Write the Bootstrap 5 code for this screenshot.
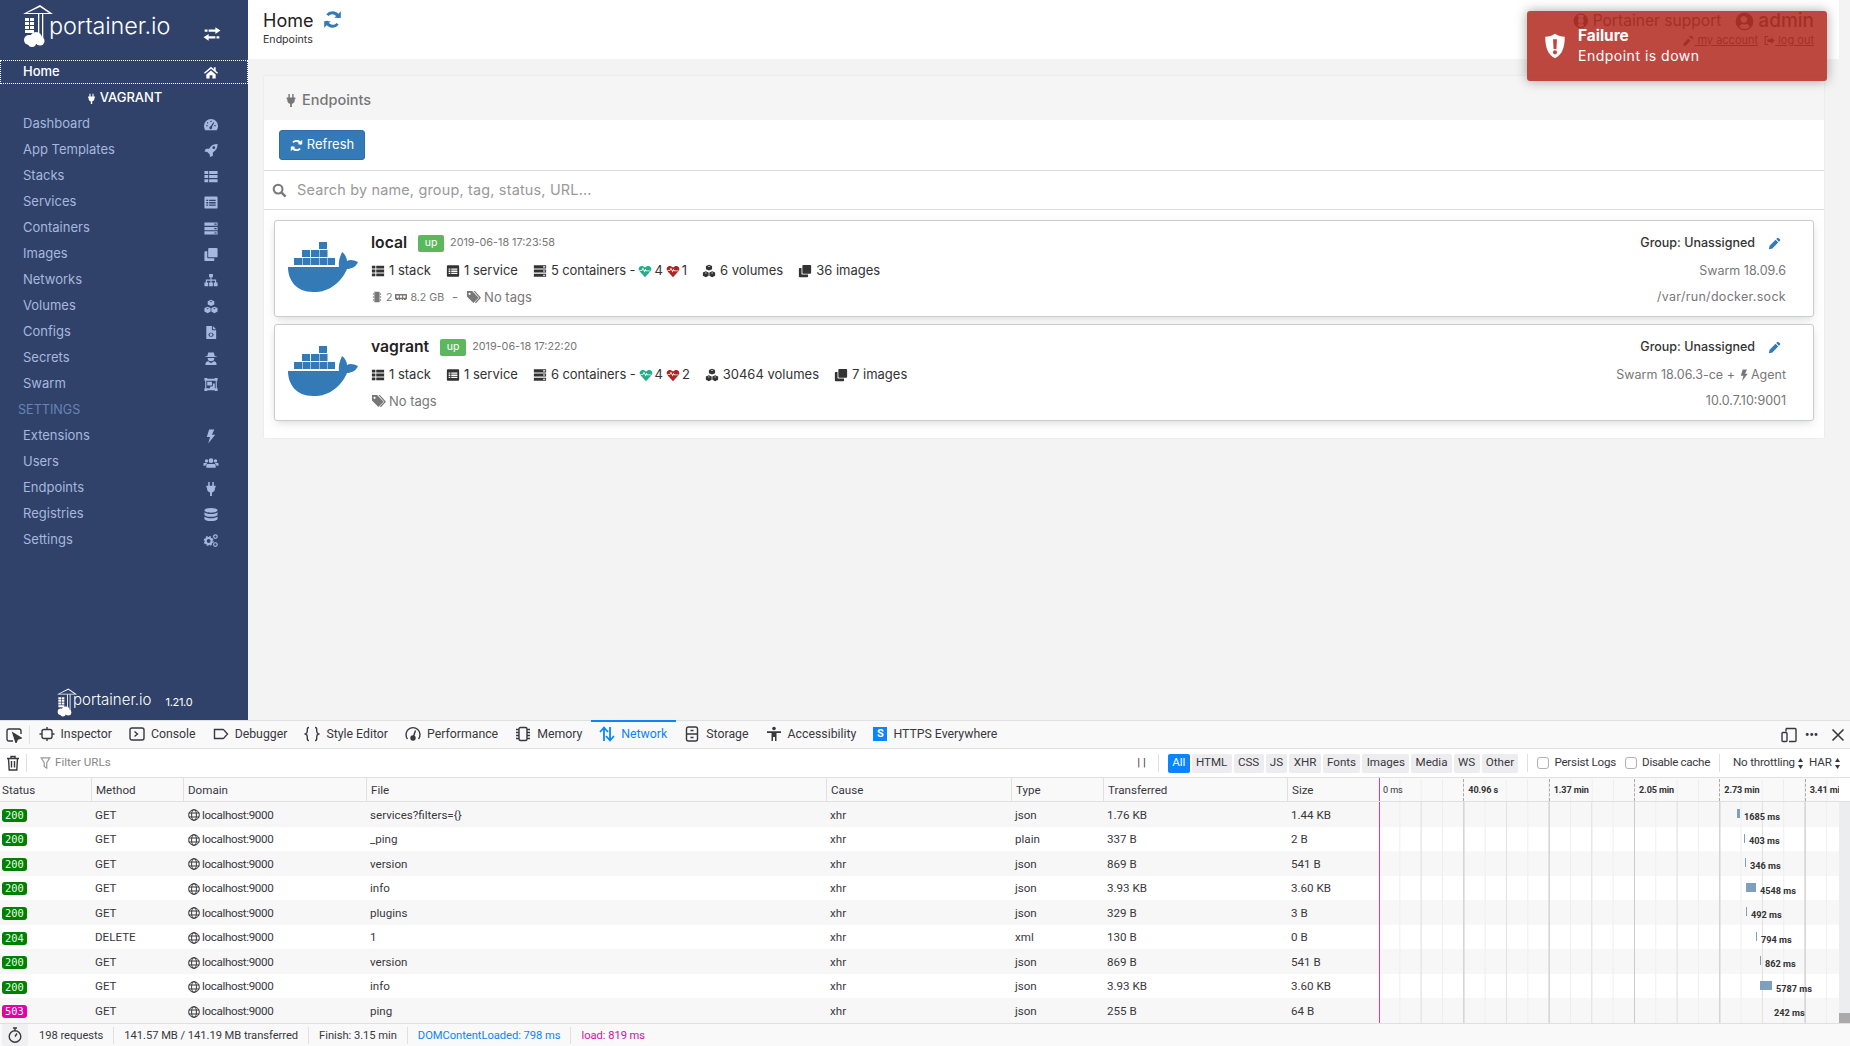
<!DOCTYPE html>
<html lang="en"><head><meta charset="utf-8"><title>Portainer</title>
<link href="https://cdn.jsdelivr.net/npm/bootstrap@5.3.0/dist/css/bootstrap.min.css" rel="stylesheet">
<style>
html,body{height:1046px;overflow:hidden}
body{font-family:Inter,"Liberation Sans",sans-serif;font-size:13px;color:#333;background:#f3f3f3;position:relative}
svg.ic{width:1em;height:1em;fill:currentColor;flex:none;display:inline-block}
.topzone{height:720px}
.sidebar{width:248px;background:#30426a;color:#a6b8dd;flex:none}
.brand{height:60px;padding-left:23px;padding-top:5px;padding-right:27px;color:#fff}
svg.brand-logo{width:30px;height:42px}
.brand-name{font-size:23.4px;font-weight:300;letter-spacing:-.1px;margin-left:-4px;margin-top:2px;line-height:38px}
svg.brand-swap{font-size:18px;margin-left:auto;margin-top:21px}
.side-row{height:26px;padding-left:23px;padding-right:28px;padding-top:2px;color:#a6b8dd;text-decoration:none;font-size:13px}
.side-row svg{font-size:15px;width:18px}
.side-home{height:24px;padding-top:0;color:#fff;outline:1px dotted #fff;outline-offset:-1px;font-weight:500}
.side-env{height:26px;padding-top:2px;color:#fff;font-weight:500}
.side-env svg{font-size:11px;margin-right:3px}
.side-title{height:26px;padding-left:18px;padding-top:2px;color:#6a82b6;font-size:12.6px}
.side-foot{color:#fff;padding-bottom:3px;padding-left:57px}
svg.foot-logo{width:20px;height:29px}
.foot-name{font-size:15px;font-weight:300;margin-left:-4px;margin-top:-5px}
.foot-ver{font-size:11px;letter-spacing:-.3px;margin-left:14px}
.main-head{height:59px;background:#fff;margin-right:11px;padding-left:15px}
.page-title{font-size:18px;line-height:22px;padding-top:10px;color:#222}
.page-title svg{font-size:19px;color:#337ab7;margin-left:10px;vertical-align:-2px}
.page-sub{font-size:10.6px;line-height:14px;margin-top:1px;color:#333}
.head-right{padding-right:25px;padding-top:10px;color:#555}
.hr-line{height:22px}
.hr-support{font-size:15.6px;margin-right:14px}
.hr-admin{font-size:19px;font-weight:500}
.hr-sub{font-size:11px;height:16px}
.hr-sub a{color:#555;margin-left:6px}
.work{padding:16px 25px 0 15px}
.widget{background:#fff;border:1px solid #ececec;border-radius:2px}
.wid-title{height:44px;background:#f5f5f5;padding-left:20px;padding-top:3px;color:#767676;font-size:14.5px;font-weight:500}
.wid-title svg{font-size:14px;margin-right:4px}
.wid-tools{height:51px;padding:10px 15px;border-bottom:1px solid #ddd}
.btn-ref{background:#337ab7;border:1px solid #2e6da4;color:#fff;font-size:13px;height:30px;width:86px;padding:0;border-radius:3px}
.search-row{height:39px;padding-left:8px;border-bottom:1px solid #ddd;color:#7a7a7a}
.search-row svg{font-size:15px;margin-right:10px}
.search-row span{font-size:14.4px;color:#999;letter-spacing:.2px}
.items{padding:10px 10px 17px}
.ep{height:97px;border:1px solid #ccc;border-radius:3px;box-shadow:0 3px 10px -2px rgba(161,170,166,.5);background:#fff;padding:8px 27px 0 13px}
.ep+.ep{margin-top:7px}
svg.whale{width:71px;height:50px;color:#337ab7;margin-top:13px;margin-right:12px;flex:none}
.l1{height:28px}.l2{height:28px}.l3{height:25px}
.ep-name{font-size:15.7px;font-weight:600;color:#222;margin-right:11px}
.up-chip{background:#5cb85c;color:#fff;font-size:10.5px;width:26px;height:17px;border-radius:2px;margin-right:6px}
.ep-date{font-size:10.8px;color:#777}
.facts{gap:15px}
.facts svg{font-size:14px;margin-right:4px}
.facts svg.hb{font-size:14px;margin:0 2px 0 3px}
.tight{letter-spacing:-.1px}
.c-ok{color:#23ae89}.c-bad{color:#ae2323}
.muted-row{color:#777;font-size:13px}
.muted-row svg{font-size:15px;margin-right:3px}
.tiny{font-size:10.6px}
.tiny svg{font-size:12px}
.ep-right{color:#777;font-size:12.5px}
.grp{color:#333;font-weight:500}
.pen{color:#337ab7;font-size:13px;margin-left:13px;margin-right:5px}
.sock{letter-spacing:.3px}
.toast-fail{position:absolute;top:11px;left:1527px;width:300px;height:70px;background:rgba(178,40,31,.85);color:#fff;border-radius:3px;box-shadow:0 0 12px rgba(0,0,0,.35);padding-left:15px}
.toast-fail svg{font-size:26px;margin-right:10px}
.toast-t{font-weight:700;font-size:15.4px;line-height:20px}
.toast-m{font-size:14px;line-height:20px;letter-spacing:.5px}
.dev{height:326px;background:#fff;font-family:Roboto,"Liberation Sans",sans-serif;font-size:12px;color:#38383d;border-top:1px solid #e0e0e1}
.dev svg{flex:none}
.dv-tabs{height:28px;background:#f9f9fa;border-bottom:1px solid #e0e0e1;flex:none}
.dv-pick{width:30px;border-right:1px solid #e0e0e1;height:18px;padding-left:6px}
.dv-tab{height:28px;margin-top:-1px;padding:0 8.5px 2px;border-top:2px solid transparent;white-space:nowrap;font-size:12.3px}
.dv-tab svg,.dv-pick svg,.dv-right svg,.dv-bar svg{width:16px;height:16px;fill:none;stroke:#38383d;stroke-width:1.4;margin-right:6px}
.dv-tab.on{border-top-color:#0a84ff;color:#0a84ff}
.dv-tab.on svg{stroke:#0a84ff}
.dv-s{width:14px;height:14px;background:#0a84ff;color:#fff;font-weight:700;font-size:11px;line-height:14px;text-align:center;margin-right:6px}
.dv-right{padding-right:4px}
.dv-right svg{margin:0 0 0 12px}
.dv-bar{height:29px;border-bottom:1px solid #e0e0e1;flex:none;color:#38383d;font-size:11.6px}
.dv-trash{width:27px;height:18px;border-right:1px solid #e0e0e1;padding-left:5px}
.dv-filter{color:#888;padding-left:13px}
.dv-bar .dv-filter svg{width:11px;height:12px;stroke:#999;margin-right:4px}
.dv-pause{margin-right:12px;color:#38383d}
.dv-chips{gap:2px;margin-left:9px;margin-right:9px}
.dv-chip{height:19px;padding:0 4.3px;background:#ededf0;border-radius:2px;color:#38383d}
.dv-chip.on{background:#0a84ff;color:#fff}
.dv-div{height:18px;border-left:1px solid #e0e0e1}
.dv-check{width:12px;height:12px;border:1px solid #b1b1b3;border-radius:3px;background:#fff;margin-left:9px;margin-right:5px}
.dv-lbl{letter-spacing:-.2px}
.dv-lbl2{letter-spacing:-.32px}
.dv-bar svg.dv-updown{width:5px;height:11px;margin:0 0 0 3px;fill:#38383d;stroke:none}
.dv-bar svg.dv-last{margin-right:10px}
.dv-thr{margin-left:13px}
.dv-har{margin-left:6px}
.dv-sep2{margin-left:9px}
.net-grid{display:grid;grid-template-columns:91px 92px 183px 460px 185px 92px 184px 92px 460px 11px;align-items:stretch}
.net-head{height:24px;background:#f9f9fa;border-bottom:1px solid #e0e0e1;flex:none;font-size:11.6px}
.net-head>div{border-left:1px solid #e0e0e1;padding-left:4px;padding-top:1px;line-height:23px;overflow:hidden;white-space:nowrap}
.net-head>div:first-child{border-left:0;padding-left:2px}
.net-head .wf-head{padding:1px 0 0;border-left:1px solid #d63bbd;display:flex}
.wf-tick{width:85.33px;flex:none;padding-left:4px;font-size:9.1px;font-weight:700;letter-spacing:-.1px;border-right:1px dashed #aaa;background-size:21.33px 100%;background-image:linear-gradient(90deg,transparent 20.3px,#eee 20.3px,#eee 21.33px);color:#333}
.wf-tick:first-child{margin-left:-1px;font-weight:400}
.head-sp{border:0!important;background:#fff}
.net-rows{display:grid;grid-template-rows:repeat(9,1fr);flex:1 1 0;min-height:0}
.net-row{font-size:11.6px;min-height:0}
.net-row:nth-child(odd){background:#f7f7f7}
.net-row:nth-child(even){background:#fff}
.net-row>div{display:flex;align-items:center;padding-left:4px;padding-top:2px;white-space:nowrap;overflow:hidden}
.net-row>div:first-child{padding-left:2px}
.net-code{font-family:"DejaVu Sans Mono","Liberation Mono",monospace;font-size:10.4px;color:#e6ffe6;background:#008000;height:13px;width:25px;border-radius:3px;line-height:13px;text-align:center}
.net-code.err{background:#e500a4;color:#fff}
.net-globe{width:12px;height:12px;stroke:#38383d;fill:none;stroke-width:1;margin-left:1px;margin-right:2px}
.dom{letter-spacing:-.35px}
.net-row>.wf{padding:0;background-image:linear-gradient(90deg,#d63bbd 1px,transparent 1px),linear-gradient(90deg,transparent 84.33px,#ccc 84.33px,#ccc 85.33px),linear-gradient(90deg,transparent 41.67px,#e2e2e2 41.67px,#e2e2e2 42.67px),linear-gradient(90deg,transparent 20.33px,#eee 20.33px,#eee 21.33px);background-size:100% 100%,85.33px 100%,42.67px 100%,21.33px 100%;overflow:hidden}
.wf-bar{background:#7f9fbf;height:9px;flex:none;align-self:flex-start;margin-top:7px}
.wf-lbl{font-size:9.2px;font-weight:700;color:#333;margin-top:5px;margin-left:4px}
.net-row>.scroll-col{background:#ecedef;padding:0;display:flex;align-items:flex-end}
.scroll-thumb{background:#aaa;height:10px;width:11px}
.dv-status{height:23px;background:#f9f9fa;border-top:1px solid #e0e0e1;flex:none;font-size:11.2px;letter-spacing:-.05px}
.dv-watch{width:26px;height:22px;margin-left:2px;margin-right:11px;background:#f0f0f2;border-radius:2px}
.dv-watch svg{width:16px;height:16px;fill:none;stroke:#38383d;stroke-width:1.4}
.st{padding-right:10px;margin-right:10px;border-right:1px solid #e0e0e1;line-height:17px}
.st-blue{color:#0a84ff}.st-pink{color:#d0149a;border:0}
</style></head>
<body class="d-flex flex-column">
<svg width="0" height="0" class="position-absolute"><defs>
<symbol id="i-swap" viewBox="0 0 16 16"><path d="M5 3h6V1l4.500 3L11 7V5H5zM1.500 3h2.500v2H1.500zM11 9H5V7L.5 10 5 13v-2h6zM12 9h2.500v2H12z"/></symbol>
<symbol id="i-home" viewBox="0 0 16 16"><path d="M8 1.800.5 8.300l1 1.100L8 3.900l6.500 5.500 1-1.100L13 6.100V2.300h-2v2.100zM3 10l5-4.200 5 4.200v4.500H9.500V11h-3v3.500H3z"/></symbol>
<symbol id="i-plug" viewBox="0 0 16 16"><path d="M5 1h1.600v4H5zM9.400 1H11v4H9.400zM3 5h10v2h-.8v1.500c0 2-1.500 3.500-3.200 3.700V16H7v-3.800c-1.700-.2-3.200-1.700-3.200-3.700V7H3z"/></symbol>
<symbol id="i-gauge" viewBox="0 0 16 16"><path fill-rule="evenodd" d="M8 2a7.500 7.500 0 0 0-7.500 7.500c0 1.600.5 3.100 1.400 4.500h12.200c.9-1.400 1.400-2.900 1.400-4.500A7.500 7.500 0 0 0 8 2zM7.300 4h1.400v1.400H7.300zM3 8.500h1.400v1.400H3zM11.600 8.500H13v1.400h-1.400zM4.300 5.300l1 1-.9.900-1-1zM10.500 5.500l.9.500L9 10.600a1.500 1.500 0 1 1-1.300-.7z"/></symbol>
<symbol id="i-rocket" viewBox="0 0 16 16"><path fill-rule="evenodd" d="M15 1c-4 0-7 1.500-9 5H2.500L1 9l3 .5 2.500 2.500.5 3 3-1.500V10c3.500-2 5-5 5-9zM11 3.500a1.500 1.500 0 1 1 0 3 1.500 1.500 0 0 1 0-3z"/></symbol>
<symbol id="i-stacks" viewBox="0 0 16 16"><path d="M1 2h4v3.200H1zM6 2h9v3.200H6zM1 6.400h4v3.200H1zM6 6.400h9v3.200H6zM1 10.800h4V14H1zM6 10.800h9V14H6z"/></symbol>
<symbol id="i-list" viewBox="0 0 16 16"><path fill-rule="evenodd" d="M2 1.500h12a1 1 0 0 1 1 1v11a1 1 0 0 1-1 1H2a1 1 0 0 1-1-1v-11a1 1 0 0 1 1-1zM3 5v1.500h2V5zM6 5v1.500h7V5zM3 7.500V9h2V7.500zM6 7.500V9h7V7.500zM3 10v1.500h2V10zM6 10v1.500h7V10z"/></symbol>
<symbol id="i-server" viewBox="0 0 16 16"><path fill-rule="evenodd" d="M1 1.500h14V5H1zM1 6.300h14v3.500H1zM1 11h14v3.500H1zM11.500 2.700v1.200h2.500V2.700zM11.500 7.500v1.200h2.500V7.500zM11.500 12.200v1.200h2.500v-1.200z"/></symbol>
<symbol id="i-clone" viewBox="0 0 16 16"><path d="M6 1h8a1 1 0 0 1 1 1v8a1 1 0 0 1-1 1H6a1 1 0 0 1-1-1V2a1 1 0 0 1 1-1zM2 4.500h2V11a1 1 0 0 0 1 1h6.500v2a1 1 0 0 1-1 1H2a1 1 0 0 1-1-1V5.500a1 1 0 0 1 1-1z"/></symbol>
<symbol id="i-net" viewBox="0 0 16 16"><path d="M6 1h4v3.500H8.600V7H13.500v3H15v4h-4v-4h1.300V8.200H8.600V10H10v4H6v-4h1.400V8.200H3.700V10H5v4H1v-4h1.500V7h4.900V4.500H6z"/></symbol>
<symbol id="i-cubes" viewBox="0 0 16 16"><path fill-rule="evenodd" d="M8 .8l3.500 1.500v3.600L8 7.500 4.500 5.900V2.300zM4.400 8.200l3.200 1.500v3.600l-3.200 1.800L1 13.300V9.700zM11.600 8.200L15 9.700v3.600l-3.400 1.800-3.200-1.800V9.700zM8 2.200 6.500 2.800 8 3.500l1.500-.7zM4.400 9.700l-1.300.6 1.300.6 1.300-.6zM11.600 9.700l-1.300.6 1.300.6 1.300-.6z"/></symbol>
<symbol id="i-code" viewBox="0 0 16 16"><path fill-rule="evenodd" d="M3 1h6v4.500h4.500V15H3zM7 8 5 10.500 7 13l.8-.6-1.500-1.900 1.500-1.900zM9 8l-.8.6 1.500 1.900-1.500 1.900L9 13l2-2.500zM10 1l3.500 3.500H10z"/></symbol>
<symbol id="i-secret" viewBox="0 0 16 16"><path d="M5 1.500h6l1 4h2v1H2v-1h2zM4.500 7.500h7a3.500 3.500 0 0 1-7 0zM2 15c0-3 1.500-4 3-4l3 2 3-2c1.500 0 3 1 3 4z"/></symbol>
<symbol id="i-swarm" viewBox="0 0 16 16"><path fill-rule="evenodd" d="M1 1h3v.8h8V1h3v3h-.8v8h.8v3h-3v-.8H4v.8H1v-3h.8V4H1zM3 4v8h10V4zM4 5h5v4H4zM7 10h2V9.800h1V7h2v5H7z"/></symbol>
<symbol id="i-bolt" viewBox="0 0 16 16"><path d="M6 .5h5.500L9 6h3.500L5 15.500 7 8.500H3.500z"/></symbol>
<symbol id="i-users" viewBox="0 0 16 16"><path d="M8 3.500a2.500 2.500 0 1 1 0 5 2.500 2.500 0 0 1 0-5zM3.200 4.500a1.800 1.800 0 1 1 0 3.600 1.800 1.800 0 0 1 0-3.600zM12.800 4.500a1.800 1.800 0 1 1 0 3.600 1.800 1.800 0 0 1 0-3.600zM4.500 9.500h7c.8 0 1.500.7 1.500 1.500v2.500H3V11c0-.8.700-1.500 1.500-1.500zM0 9c0-.4.400-.6 1.500-.6h1.600c.3.500.6.800 1 1-1.200.2-2 1-2 2.100H0zM16 9c0-.4-.4-.6-1.500-.6h-1.600c-.3.500-.6.800-1 1 1.200.2 2 1 2 2.100H16z"/></symbol>
<symbol id="i-db" viewBox="0 0 16 16"><path d="M8 1c3.800 0 7 1.100 7 2.500S11.800 6 8 6 1 4.900 1 3.500 4.200 1 8 1zM1 5.500C2 6.800 5 7.400 8 7.400s6-.6 7-1.900V8c0 1.400-3.200 2.500-7 2.500S1 9.400 1 8zM1 10c1 1.300 4 1.900 7 1.900s6-.6 7-1.900v2.500c0 1.400-3.200 2.500-7 2.500s-7-1.100-7-2.500z"/></symbol>
<symbol id="i-cogs" viewBox="0 0 16 16"><circle cx="5.500" cy="8.500" r="3.200" fill="none" stroke="currentColor" stroke-width="2.200"/><circle cx="5.500" cy="8.500" r="4.700" fill="none" stroke="currentColor" stroke-width="1.200" stroke-dasharray="2 1.700"/><circle cx="12.700" cy="3.800" r="1.900" fill="none" stroke="currentColor" stroke-width="1.300"/><circle cx="12.700" cy="12.300" r="1.900" fill="none" stroke="currentColor" stroke-width="1.300"/></symbol>
<symbol id="i-refresh" viewBox="0 0 16 16"><path d="M13.300 6.800A5.500 5.500 0 0 0 3.700 4.300M2.700 9.200a5.500 5.500 0 0 0 9.600 2.500" fill="none" stroke="currentColor" stroke-width="2.400"/><path d="M15 1v5.500H9.500zM1 15V9.500h5.500z"/></symbol>
<symbol id="i-search" viewBox="0 0 16 16"><circle cx="6.500" cy="6.500" r="4.700" fill="none" stroke="currentColor" stroke-width="2.200"/><path d="M10 10l4.500 4.500" stroke="currentColor" stroke-width="2.600" fill="none"/></symbol>
<symbol id="i-tags" viewBox="0 0 16 16"><path fill-rule="evenodd" d="M1 1h5.500l7 7.200-5.600 5.600L1 7zM3.800 2.800a1.200 1.200 0 1 0 0 2.400 1.200 1.200 0 0 0 0-2.400z"/><path d="M8 1h1.500l6.500 7.200L10.500 14l-1-1 4.700-4.800z"/></symbol>
<symbol id="i-heart" viewBox="0 0 16 16"><path fill-rule="evenodd" d="M8 15 2 8.700C.6 7.200.5 5.400 1.200 4 2.400 1.800 5.700 1.300 8 4c2.300-2.700 5.600-2.200 6.800 0 .7 1.400.6 3.200-.8 4.700zM1.500 7.800h3.200l1-1.800 1.800 3.700 1.200-2.300.5.900h4.800v-1h-4.200L8.500 5.500 7.500 7.600 5.700 3.900 4.200 6.800H1.500z"/></symbol>
<symbol id="i-pencil" viewBox="0 0 16 16"><path d="M11.500 1.200a1 1 0 0 1 1.400 0l1.900 1.900a1 1 0 0 1 0 1.400l-1.400 1.400-3.300-3.300zM9.300 3.400l3.300 3.300-7.300 7.300L1 15l1-4.300z"/></symbol>
<symbol id="i-chip" viewBox="0 0 16 16"><path d="M4.500 1h7v14h-7zM2.500 3h1.300v2H2.500zM2.500 7h1.300v2H2.500zM2.500 11h1.300v2H2.500zM12.200 3h1.300v2h-1.300zM12.200 7h1.300v2h-1.300zM12.200 11h1.300v2h-1.300z"/></symbol>
<symbol id="i-mem" viewBox="0 0 16 16"><path fill-rule="evenodd" d="M0 4h16v6.500h-1V12h-3v-1.500h-1V12H9v-1.500H7V12H5v-1.500H4V12H1v-1.500H0zM2 6v3h3V6zM6.500 6v3h3V6zM11 6v3h3V6z"/></symbol>
<symbol id="i-wrench" viewBox="0 0 16 16"><path d="M10.500 1a4.500 4.500 0 0 1 4.200 6l-2.700-2.600-2-.4-.4-2L7 1.400zM7.600 5 11 8.500 4.500 15A2 2 0 0 1 1 12.500z"/></symbol>
<symbol id="i-out" viewBox="0 0 16 16"><path d="M6 3H2.500v10H6v1.500H1v-13h5zM10 3l5.500 5-5.500 5v-3H5V6h5z"/></symbol>
<symbol id="i-ring" viewBox="0 0 16 16"><path fill-rule="evenodd" d="M8 .5a7.500 7.500 0 1 1 0 15 7.500 7.500 0 0 1 0-15zM8 5a3 3 0 1 0 0 6 3 3 0 0 0 0-6zM4.500 2.800 6 5.100c.6-.4 1.300-.6 2-.6s1.400.2 2 .6l1.500-2.300A6.300 6.300 0 0 0 8 1.800a6.300 6.300 0 0 0-3.500 1zM4.500 13.200 6 10.900c.6.400 1.300.6 2 .6s1.400-.2 2-.6l1.500 2.300a6.300 6.300 0 0 1-7 0z"/></symbol>
<symbol id="i-user" viewBox="0 0 16 16"><path fill-rule="evenodd" d="M8 .5a7.500 7.500 0 1 1 0 15 7.500 7.500 0 0 1 0-15zM8 3.500A2.800 2.800 0 1 0 8 9a2.800 2.800 0 0 0 0-5.500zM3.700 12.700A5.900 5.900 0 0 0 8 14.300a5.900 5.900 0 0 0 4.300-1.600c-.3-1.600-1.500-2.500-2.600-2.700a3.800 3.800 0 0 1-3.400 0c-1.100.2-2.300 1.100-2.600 2.700z"/></symbol>
<symbol id="i-shield" viewBox="0 0 16 16"><path fill-rule="evenodd" d="M8 .5c1.700 1.200 3.700 1.800 6 1.800 0 6.500-1.500 11-6 13.200C3.500 13.300 2 8.800 2 2.300 4.300 2.300 6.300 1.700 8 .5zM6.800 3.800l.3 6h1.800l.3-6zM8 10.600a1.300 1.300 0 1 0 0 2.600 1.300 1.300 0 0 0 0-2.600z"/></symbol>
<symbol id="i-logo" viewBox="0 0 30 42"><path d="M0 9 17 0l13 9zM17 2 4 8h22z" fill-rule="evenodd"/><path d="M15 9h1.300v28H15zM19 9h1.300v28H19z"/><path d="M2 13h4v3H2zM7 13h4v3H7zM2 17h4v3H2zM7 17h4v3H7zM2 21h4v3H2zM7 21h4v3H7zM2 25h9v3H2z"/><circle cx="6" cy="35" r="5"/><circle cx="13" cy="33" r="6"/><circle cx="17" cy="36" r="4.500"/><circle cx="9" cy="38" r="4"/></symbol>
<symbol id="i-whale" viewBox="0 0 71 50"><path d="M31 0h8v7h-8zM14 8h8v7h-8zM23 8h8v7h-8zM31.500 8h8v7h-8zM6 16h8v7H6zM14.500 16h8v7h-8zM23 16h8v7h-8zM31.500 16h8v7h-8zM40 16h7v7h-7zM0 25H51C50 18 53 13 54 10c3 2 5 6 5 9 3-2 7-1 11 1-2 5-7 7-11 7-4 10-16 24-34 23C8 50 0 38 0 25z"/></symbol>
<symbol id="d-pick" viewBox="0 0 16 16"><path d="M7 14H3a2 2 0 0 1-2-2V4a2 2 0 0 1 2-2h10a2 2 0 0 1 2 2v3"/><path d="M7 6l8 5-3.500 1L10 15.500z" fill="#38383d"/></symbol>
<symbol id="d-insp" viewBox="0 0 16 16"><rect x="3" y="3.500" width="10" height="9" rx="2"/><path d="M8 1v2.500M8 12.500V15M.5 8H3M13 8h2.500"/></symbol>
<symbol id="d-cons" viewBox="0 0 16 16"><rect x="1" y="2" width="14" height="12" rx="2"/><path d="M5.500 5.500 8.500 8l-3 2.500"/></symbol>
<symbol id="d-dbg" viewBox="0 0 16 16"><path d="M1.500 3.500h8.500a1 1 0 0 1 .8.400L14.500 8l-3.700 4.100a1 1 0 0 1-.8.400H1.500z"/></symbol>
<symbol id="d-style" viewBox="0 0 16 16"><path d="M5 1.500C3 1.500 3.300 3 3.300 5S3 7.500 1.500 8c1.500.5 1.800 1 1.800 3S3 14.500 5 14.500M11 1.500c2 0 1.700 1.500 1.700 3.500s.3 2.500 1.800 3c-1.500.5-1.800 1-1.800 3s.3 3.500-1.700 3.500"/></symbol>
<symbol id="d-perf" viewBox="0 0 16 16"><path d="M2.500 13A7 7 0 1 1 13.500 13"/><path d="M10.500 4.500 8.600 10"/><circle cx="8" cy="12" r="2" fill="#38383d"/></symbol>
<symbol id="d-mem" viewBox="0 0 16 16"><rect x="4" y="1.500" width="8" height="13" rx="1.500"/><path d="M1 3.500h3M1 6.500h3M1 9.500h3M1 12.500h3M12 3.500h3M12 6.500h3M12 9.500h3M12 12.500h3"/></symbol>
<symbol id="d-net" viewBox="0 0 16 16"><path d="M5 15V2M1 6l4-4.500L9 6M11 1v13M7 10l4 4.500L15 10" stroke-width="1.800"/></symbol>
<symbol id="d-store" viewBox="0 0 16 16"><rect x="2.500" y="1" width="11" height="14" rx="2"/><path d="M2.500 8h11M6.500 4.500h3M6.500 11.500h3"/></symbol>
<symbol id="d-a11y" viewBox="0 0 16 16"><circle cx="8" cy="2.500" r="1.800" fill="#38383d" stroke="none"/><path d="M1 5.300h14v1.800h-4.500V15H9V11H7v4H5.500V7.100H1z" fill="#38383d" stroke="none"/></symbol>
<symbol id="d-resp" viewBox="0 0 16 16"><rect x="1" y="5.500" width="5" height="9" rx="1"/><path d="M5 1.500h9a1 1 0 0 1 1 1v11a1 1 0 0 1-1 1H8"/><path d="M5 1.500v3"/></symbol>
<symbol id="d-x" viewBox="0 0 16 16"><path d="M2.500 2.500l11 11M13.500 2.500l-11 11" stroke-width="1.600"/></symbol>
<symbol id="d-trash" viewBox="0 0 16 16"><path d="M2 3.500h12M6 3.500V1.500h4v2M3.500 3.500l.7 11.500h7.600l.7-11.500M6.500 6v6.500M9.500 6v6.500"/></symbol>
<symbol id="d-funnel" viewBox="0 0 12 14"><path d="M1 1h10L7.500 6.500V13l-3-2V6.500z"/></symbol>
<symbol id="d-watch" viewBox="0 0 16 16"><circle cx="8" cy="9.500" r="5.800"/><path d="M6 1h4M8 1v2.500M8 9.500l2-3"/></symbol>
<symbol id="d-globe" viewBox="0 0 12 12"><circle cx="6" cy="6" r="5.300"/><ellipse cx="6" cy="6" rx="2.400" ry="5.300"/><path d="M.7 4h10.600M.7 8h10.600"/></symbol>
<symbol id="d-ud" viewBox="0 0 5 11"><path d="M2.500 0 5 4H0zM2.500 11 0 7h5z"/></symbol>
</defs></svg>

<div class="topzone d-flex flex-none">
<nav class="sidebar d-flex flex-column">
<div class="brand d-flex align-items-start"><svg class="ic brand-logo"><use href="#i-logo"/></svg><span class="brand-name">portainer.io</span><svg class="ic brand-swap"><use href="#i-swap"/></svg></div>
<a class="side-row side-home d-flex align-items-center justify-content-between" href="#">Home<svg class="ic"><use href="#i-home"/></svg></a>
<div class="side-env d-flex align-items-center justify-content-center"><svg class="ic"><use href="#i-plug"/></svg>VAGRANT</div>
<a class="side-row d-flex align-items-center justify-content-between" href="#">Dashboard<svg class="ic"><use href="#i-gauge"/></svg></a>
<a class="side-row d-flex align-items-center justify-content-between" href="#">App Templates<svg class="ic"><use href="#i-rocket"/></svg></a>
<a class="side-row d-flex align-items-center justify-content-between" href="#">Stacks<svg class="ic"><use href="#i-stacks"/></svg></a>
<a class="side-row d-flex align-items-center justify-content-between" href="#">Services<svg class="ic"><use href="#i-list"/></svg></a>
<a class="side-row d-flex align-items-center justify-content-between" href="#">Containers<svg class="ic"><use href="#i-server"/></svg></a>
<a class="side-row d-flex align-items-center justify-content-between" href="#">Images<svg class="ic"><use href="#i-clone"/></svg></a>
<a class="side-row d-flex align-items-center justify-content-between" href="#">Networks<svg class="ic"><use href="#i-net"/></svg></a>
<a class="side-row d-flex align-items-center justify-content-between" href="#">Volumes<svg class="ic"><use href="#i-cubes"/></svg></a>
<a class="side-row d-flex align-items-center justify-content-between" href="#">Configs<svg class="ic"><use href="#i-code"/></svg></a>
<a class="side-row d-flex align-items-center justify-content-between" href="#">Secrets<svg class="ic"><use href="#i-secret"/></svg></a>
<a class="side-row d-flex align-items-center justify-content-between" href="#">Swarm<svg class="ic"><use href="#i-swarm"/></svg></a>
<div class="side-title d-flex align-items-center">SETTINGS</div>
<a class="side-row d-flex align-items-center justify-content-between" href="#">Extensions<svg class="ic"><use href="#i-bolt"/></svg></a>
<a class="side-row d-flex align-items-center justify-content-between" href="#">Users<svg class="ic"><use href="#i-users"/></svg></a>
<a class="side-row d-flex align-items-center justify-content-between" href="#">Endpoints<svg class="ic"><use href="#i-plug"/></svg></a>
<a class="side-row d-flex align-items-center justify-content-between" href="#">Registries<svg class="ic"><use href="#i-db"/></svg></a>
<a class="side-row d-flex align-items-center justify-content-between" href="#">Settings<svg class="ic"><use href="#i-cogs"/></svg></a>
<div class="side-foot mt-auto d-flex align-items-center"><svg class="ic foot-logo"><use href="#i-logo"/></svg><span class="foot-name">portainer.io</span><span class="foot-ver">1.21.0</span></div>
</nav>
<div class="flex-grow-1 d-flex flex-column">
<header class="main-head d-flex justify-content-between flex-none">
<div><div class="page-title">Home<svg class="ic"><use href="#i-refresh"/></svg></div><div class="page-sub">Endpoints</div></div>
<div class="head-right">
<div class="hr-line d-flex align-items-center justify-content-end"><span class="hr-support d-flex align-items-center gap-1"><svg class="ic"><use href="#i-ring"/></svg>Portainer support</span><span class="hr-admin d-flex align-items-center gap-1"><svg class="ic"><use href="#i-user"/></svg>admin</span></div>
<div class="hr-sub d-flex align-items-center justify-content-end"><a href="#"><svg class="ic"><use href="#i-wrench"/></svg> my account</a><a href="#"><svg class="ic"><use href="#i-out"/></svg> log out</a></div>
</div>
</header>
<main class="work flex-grow-1">
<section class="widget">
<div class="wid-title d-flex align-items-center"><svg class="ic"><use href="#i-plug"/></svg>Endpoints</div>
<div class="wid-tools"><button class="btn btn-ref d-flex align-items-center justify-content-center gap-1"><svg class="ic"><use href="#i-refresh"/></svg>Refresh</button></div>
<div class="search-row d-flex align-items-center"><svg class="ic"><use href="#i-search"/></svg><span>Search by name, group, tag, status, URL...</span></div>
<div class="items">
<article class="ep d-flex">
<svg class="whale"><use href="#i-whale" fill="currentColor"/></svg>
<div class="flex-grow-1">
<div class="l1 d-flex align-items-center"><span class="ep-name">local</span><span class="up-chip d-flex align-items-center justify-content-center">up</span><span class="ep-date">2019-06-18 17:23:58</span></div>
<div class="l2 d-flex align-items-center facts"><span class="d-flex align-items-center"><svg class="ic"><use href="#i-stacks"/></svg>1 stack</span><span class="d-flex align-items-center"><svg class="ic"><use href="#i-list"/></svg>1 service</span><span class="d-flex align-items-center tight"><svg class="ic"><use href="#i-server"/></svg>5 containers -<svg class="ic hb c-ok"><use href="#i-heart"/></svg>4<svg class="ic hb c-bad"><use href="#i-heart"/></svg>1</span><span class="d-flex align-items-center"><svg class="ic"><use href="#i-cubes"/></svg>6 volumes</span><span class="d-flex align-items-center"><svg class="ic"><use href="#i-clone"/></svg>36 images</span></div>
<div class="l3 d-flex align-items-center muted-row"><span class="tiny d-flex align-items-center"><svg class="ic"><use href="#i-chip"/></svg>2&nbsp;<svg class="ic"><use href="#i-mem"/></svg>8.2 GB</span><span class="mx-2">-</span><svg class="ic"><use href="#i-tags"/></svg>No tags</div>
</div>
<div class="ep-right text-end">
<div class="l1 d-flex align-items-center justify-content-end grp">Group: Unassigned<svg class="ic pen"><use href="#i-pencil"/></svg></div>
<div class="l2 d-flex align-items-center justify-content-end">Swarm 18.09.6</div>
<div class="l3 d-flex align-items-center justify-content-end sock">/var/run/docker.sock</div>
</div>
</article>
<article class="ep d-flex">
<svg class="whale"><use href="#i-whale" fill="currentColor"/></svg>
<div class="flex-grow-1">
<div class="l1 d-flex align-items-center"><span class="ep-name">vagrant</span><span class="up-chip d-flex align-items-center justify-content-center">up</span><span class="ep-date">2019-06-18 17:22:20</span></div>
<div class="l2 d-flex align-items-center facts"><span class="d-flex align-items-center"><svg class="ic"><use href="#i-stacks"/></svg>1 stack</span><span class="d-flex align-items-center"><svg class="ic"><use href="#i-list"/></svg>1 service</span><span class="d-flex align-items-center tight"><svg class="ic"><use href="#i-server"/></svg>6 containers -<svg class="ic hb c-ok"><use href="#i-heart"/></svg>4<svg class="ic hb c-bad"><use href="#i-heart"/></svg>2</span><span class="d-flex align-items-center"><svg class="ic"><use href="#i-cubes"/></svg>30464 volumes</span><span class="d-flex align-items-center"><svg class="ic"><use href="#i-clone"/></svg>7 images</span></div>
<div class="l3 d-flex align-items-center muted-row"><svg class="ic"><use href="#i-tags"/></svg>No tags</div>
</div>
<div class="ep-right text-end">
<div class="l1 d-flex align-items-center justify-content-end grp">Group: Unassigned<svg class="ic pen"><use href="#i-pencil"/></svg></div>
<div class="l2 d-flex align-items-center justify-content-end">Swarm 18.06.3-ce +&nbsp;<svg class="ic"><use href="#i-bolt"/></svg>Agent</div>
<div class="l3 d-flex align-items-center justify-content-end">10.0.7.10:9001</div>
</div>
</article>
</div>
</section>
</main>
</div>
</div>

<div class="toast-fail d-flex align-items-center"><svg class="ic"><use href="#i-shield"/></svg><div><div class="toast-t">Failure</div><div class="toast-m">Endpoint is down</div></div></div>

<section class="dev d-flex flex-column flex-none">
<div class="dv-tabs d-flex align-items-center">
<div class="dv-pick d-flex align-items-center"><svg><use href="#d-pick"/></svg></div>
<div class="dv-tab d-flex align-items-center"><svg><use href="#d-insp"/></svg>Inspector</div>
<div class="dv-tab d-flex align-items-center"><svg><use href="#d-cons"/></svg>Console</div>
<div class="dv-tab d-flex align-items-center"><svg><use href="#d-dbg"/></svg>Debugger</div>
<div class="dv-tab d-flex align-items-center"><svg><use href="#d-style"/></svg>Style Editor</div>
<div class="dv-tab d-flex align-items-center"><svg><use href="#d-perf"/></svg>Performance</div>
<div class="dv-tab d-flex align-items-center"><svg><use href="#d-mem"/></svg>Memory</div>
<div class="dv-tab on d-flex align-items-center"><svg><use href="#d-net"/></svg>Network</div>
<div class="dv-tab d-flex align-items-center"><svg><use href="#d-store"/></svg>Storage</div>
<div class="dv-tab d-flex align-items-center"><svg><use href="#d-a11y"/></svg>Accessibility</div>
<div class="dv-tab d-flex align-items-center"><span class="dv-s">S</span>HTTPS Everywhere</div>
<div class="dv-right ms-auto d-flex align-items-center"><svg><use href="#d-resp"/></svg><span class="ms-2 fw-bold">•••</span><svg><use href="#d-x"/></svg></div>
</div>
<div class="dv-bar d-flex align-items-center">
<div class="dv-trash d-flex align-items-center"><svg><use href="#d-trash"/></svg></div>
<div class="dv-filter d-flex align-items-center"><svg><use href="#d-funnel"/></svg>Filter URLs</div>
<div class="ms-auto d-flex align-items-center">
<div class="dv-pause">| |</div>
<div class="dv-div"></div>
<div class="dv-chips d-flex align-items-center"><span class="dv-chip on d-flex align-items-center">All</span><span class="dv-chip d-flex align-items-center">HTML</span><span class="dv-chip d-flex align-items-center">CSS</span><span class="dv-chip d-flex align-items-center">JS</span><span class="dv-chip d-flex align-items-center">XHR</span><span class="dv-chip d-flex align-items-center">Fonts</span><span class="dv-chip d-flex align-items-center">Images</span><span class="dv-chip d-flex align-items-center">Media</span><span class="dv-chip d-flex align-items-center">WS</span><span class="dv-chip d-flex align-items-center">Other</span></div>
<div class="dv-div"></div>
<span class="dv-check"></span><span class="dv-lbl">Persist Logs</span><span class="dv-check"></span><span class="dv-lbl2">Disable cache</span>
<div class="dv-div dv-sep2"></div>
<span class="dv-thr dv-lbl">No throttling</span><svg class="dv-updown"><use href="#d-ud"/></svg><span class="dv-har">HAR</span><svg class="dv-updown dv-last"><use href="#d-ud"/></svg>
</div>
</div>
<div class="net-grid net-head">
<div>Status</div><div>Method</div><div>Domain</div><div>File</div><div>Cause</div><div>Type</div><div>Transferred</div><div>Size</div>
<div class="wf-head"><span class="wf-tick">0 ms</span><span class="wf-tick">40.96 s</span><span class="wf-tick">1.37 min</span><span class="wf-tick">2.05 min</span><span class="wf-tick">2.73 min</span><span class="wf-tick">3.41 min</span></div><div class="head-sp"></div>
</div>
<div class="net-rows">
<div class="net-grid net-row"><div><span class="net-code">200</span></div><div>GET</div><div class="dom"><svg class="net-globe"><use href="#d-globe"/></svg>localhost:9000</div><div>services?filters={}</div><div>xhr</div><div>json</div><div>1.76 KB</div><div>1.44 KB</div><div class="wf"><span class="wf-bar" style="margin-left:358px;width:3px"></span><span class="wf-lbl">1685 ms</span></div><div class="scroll-col"></div></div>
<div class="net-grid net-row"><div><span class="net-code">200</span></div><div>GET</div><div class="dom"><svg class="net-globe"><use href="#d-globe"/></svg>localhost:9000</div><div>_ping</div><div>xhr</div><div>plain</div><div>337 B</div><div>2 B</div><div class="wf"><span class="wf-bar" style="margin-left:365px;width:1px"></span><span class="wf-lbl">403 ms</span></div><div class="scroll-col"></div></div>
<div class="net-grid net-row"><div><span class="net-code">200</span></div><div>GET</div><div class="dom"><svg class="net-globe"><use href="#d-globe"/></svg>localhost:9000</div><div>version</div><div>xhr</div><div>json</div><div>869 B</div><div>541 B</div><div class="wf"><span class="wf-bar" style="margin-left:366px;width:1px"></span><span class="wf-lbl">346 ms</span></div><div class="scroll-col"></div></div>
<div class="net-grid net-row"><div><span class="net-code">200</span></div><div>GET</div><div class="dom"><svg class="net-globe"><use href="#d-globe"/></svg>localhost:9000</div><div>info</div><div>xhr</div><div>json</div><div>3.93 KB</div><div>3.60 KB</div><div class="wf"><span class="wf-bar" style="margin-left:367px;width:10px"></span><span class="wf-lbl">4548 ms</span></div><div class="scroll-col"></div></div>
<div class="net-grid net-row"><div><span class="net-code">200</span></div><div>GET</div><div class="dom"><svg class="net-globe"><use href="#d-globe"/></svg>localhost:9000</div><div>plugins</div><div>xhr</div><div>json</div><div>329 B</div><div>3 B</div><div class="wf"><span class="wf-bar" style="margin-left:367px;width:1px"></span><span class="wf-lbl">492 ms</span></div><div class="scroll-col"></div></div>
<div class="net-grid net-row"><div><span class="net-code">204</span></div><div>DELETE</div><div class="dom"><svg class="net-globe"><use href="#d-globe"/></svg>localhost:9000</div><div>1</div><div>xhr</div><div>xml</div><div>130 B</div><div>0 B</div><div class="wf"><span class="wf-bar" style="margin-left:377px;width:1px"></span><span class="wf-lbl">794 ms</span></div><div class="scroll-col"></div></div>
<div class="net-grid net-row"><div><span class="net-code">200</span></div><div>GET</div><div class="dom"><svg class="net-globe"><use href="#d-globe"/></svg>localhost:9000</div><div>version</div><div>xhr</div><div>json</div><div>869 B</div><div>541 B</div><div class="wf"><span class="wf-bar" style="margin-left:381px;width:1px"></span><span class="wf-lbl">862 ms</span></div><div class="scroll-col"></div></div>
<div class="net-grid net-row"><div><span class="net-code">200</span></div><div>GET</div><div class="dom"><svg class="net-globe"><use href="#d-globe"/></svg>localhost:9000</div><div>info</div><div>xhr</div><div>json</div><div>3.93 KB</div><div>3.60 KB</div><div class="wf"><span class="wf-bar" style="margin-left:381px;width:12px"></span><span class="wf-lbl">5787 ms</span></div><div class="scroll-col"></div></div>
<div class="net-grid net-row"><div><span class="net-code err">503</span></div><div>GET</div><div class="dom"><svg class="net-globe"><use href="#d-globe"/></svg>localhost:9000</div><div>ping</div><div>xhr</div><div>json</div><div>255 B</div><div>64 B</div><div class="wf"><span class="wf-lbl" style="margin-left:395px">242 ms</span></div><div class="scroll-col"><span class="scroll-thumb"></span></div></div>
</div>
<div class="dv-status d-flex align-items-center">
<div class="dv-watch d-flex align-items-center justify-content-center"><svg><use href="#d-watch"/></svg></div>
<span class="st">198 requests</span><span class="st">141.57 MB / 141.19 MB transferred</span><span class="st">Finish: 3.15 min</span><span class="st st-blue">DOMContentLoaded: 798 ms</span><span class="st st-pink">load: 819 ms</span>
</div>
</section>
</body></html>
